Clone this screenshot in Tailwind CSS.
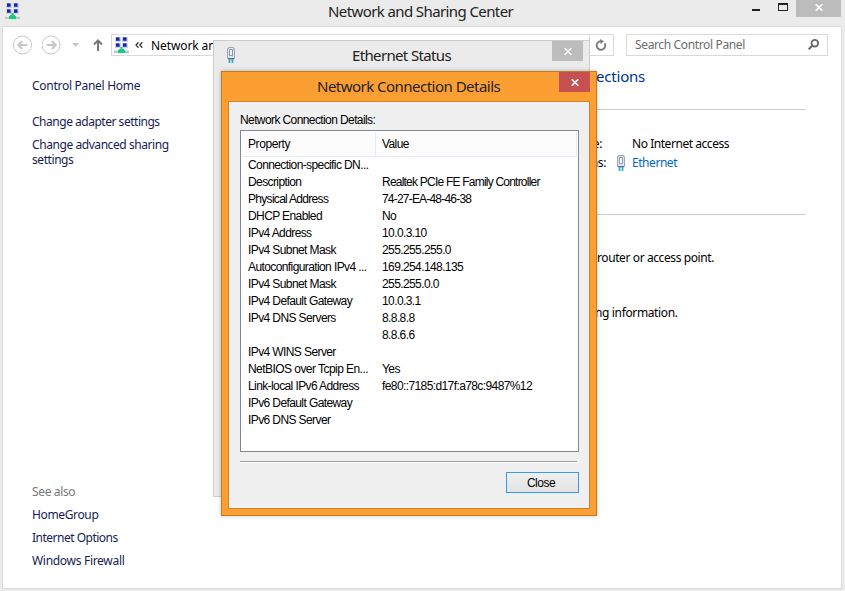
<!DOCTYPE html>
<html lang="en">
<head>
<meta charset="utf-8">
<title>Network and Sharing Center</title>
<script src="https://cdn.jsdelivr.net/npm/@tailwindcss/browser@4"></script>
</head>
<body class="relative h-[591px] w-[845px] overflow-hidden bg-[#ebebeb] font-['Noto_Sans','Open_Sans',sans-serif] text-[12px] leading-[15px] tracking-[-0.36px] text-black">
<svg class="hidden">
  <symbol id="net" viewBox="0 0 16 16">
    <path d="M1 0h6v5H1zM8 0h6v5H8zM1 6h6v5H1zM8 6h6v5H8z" fill="#ced3df"/>
    <path d="M2 .5h4v3.5H2zM9 .5h4v3.5H9zM2 6.5h4V10H2zM9 6.5h4V10H9z" fill="#5b74dc"/>
    <path d="M2 .5h3v3H2zM9 .5h3v3H9zM2 6.5h3v3H2zM9 6.5h3v3H9z" fill="#1526a8"/>
    <path fill="#bfc2c2" d="M0 13h15v3H0z"/><path fill="#e6e6e6" d="M0 13h15v1H0z"/><path fill="#16cc80" d="M6.500 10h2v2h1.500v1h1v3H4v-3h1v-1h1.500z"/>
  </symbol>
  <symbol id="plug" viewBox="0 0 10 16">
    <path d="M1.500 1.500h1v-1h5v1h1v10h-7z" fill="#dfe5ec" stroke="#9aa5b8"/>
    <path d="M3.500 2.500h3v6h-3z" fill="#fafcfe" stroke="#8a97ac"/>
    <path d="M2 11h6v1.500H2z" fill="#4f6f8c"/><path d="M3.500 12.500v3.500M6.500 12.500v3.500" stroke="#35a9d6" stroke-width="1.800"/>
  </symbol>
  <symbol id="x" viewBox="0 0 8 7"><path d="M.7.2l6.600 6.600M7.300.2L.7 6.800" stroke="#fff" stroke-width="1.600"/></symbol>
</svg>

<!-- Main window -->
<div class="flex h-[591px] w-[845px] flex-col pr-[3px] pb-[2px] pl-[2px]">
  <header class="grid h-[26px] shrink-0 grid-cols-[326px_186px_1fr] items-start">
    <svg class="mt-[3px] ml-[3px] h-4 w-4"><use href="#net"/></svg>
    <h1 class="mt-[-1px] text-[15px] leading-[24px] tracking-[-0.6px] whitespace-nowrap text-[#222]">Network and Sharing Center</h1>
    <div class="flex justify-end">
      <div class="mt-[9px] mr-[18px] h-[2px] w-2 bg-[#222]"></div>
      <div class="mt-[3px] mr-2 h-2 w-[10px] border border-t-2 border-[#222]"></div>
      <div class="mr-[1px] flex h-[17px] w-[45px] items-center justify-center bg-[#bcbcbc] pb-[2px]"><svg class="h-[7px] w-2"><use href="#x"/></svg></div>
    </div>
  </header>
  <div class="flex min-h-0 flex-1 flex-col border border-[#d9d9d9] bg-white">
    <nav class="mt-[7px] flex h-[22px] items-center pr-[12px] pl-[10px]">
      <svg class="h-5 w-5" viewBox="0 0 20 20" fill="none" stroke="#c8c8c8"><circle cx="9.500" cy="10" r="9"/><path d="M14.500 10H5.500M9.200 6l-4 4 4 4" stroke-width="2"/></svg>
      <svg class="ml-[9px] h-5 w-5" viewBox="0 0 20 20" fill="none" stroke="#c8c8c8"><circle cx="9" cy="10" r="9"/><path d="M4.500 10h9M9.800 6l4 4-4 4" stroke-width="2"/></svg>
      <svg class="ml-[10px] h-1 w-[7px]" viewBox="0 0 7 4"><path d="M0 0h7L3.500 4z" fill="#c8c8c8"/></svg>
      <svg class="ml-[14px] h-3 w-[10px]" viewBox="0 0 10 12" fill="none" stroke="#777" stroke-width="2"><path d="M5 12V1.500M1 5.500l4-4 4 4"/></svg>
      <div class="ml-2 flex h-[22px] w-[479px] items-center border border-[#d9d9d9] pl-[2px]">
        <svg class="h-4 w-4"><use href="#net"/></svg>
        <svg class="ml-[5px] h-[6px] w-2" viewBox="0 0 8 6" fill="none" stroke="#222" stroke-width="1.200"><path d="M3.500.3L1 3l2.500 2.700M7.300.3L4.800 3l2.500 2.700"/></svg>
        <span class="ml-2 whitespace-nowrap tracking-[-0.1px]">Network and</span>
      </div>
      <div class="ml-[-1px] flex h-[22px] w-[25px] items-center justify-center border border-[#d9d9d9] pr-px">
        <svg class="h-3 w-3" viewBox="0 0 12 12" fill="none" stroke="#777" stroke-width="1.800"><path d="M9.600 4.200A4.300 4.300 0 1 1 5.500 2.200"/><path d="M5 0l4 2.500L5.500 5z" fill="#777" stroke="none"/></svg>
      </div>
      <div class="ml-3 flex h-[22px] w-[202px] items-center justify-between border border-[#d9d9d9] pr-2 pb-px pl-2">
        <span class="text-[#6d6d6d]">Search Control Panel</span>
        <svg class="h-[11px] w-[11px]" viewBox="0 0 11 11" fill="none" stroke="#666"><circle cx="6.800" cy="4.200" r="3.300" stroke-width="1.800"/><path d="M4.500 6.500L.7 10.300" stroke-width="2"/></svg>
      </div>
    </nav>
    <div class="flex min-h-0 flex-1">
      <aside class="flex w-[582px] flex-col pl-[29px] text-[#151c55]">
        <a class="mt-[22px] tracking-[-0.28px]">Control Panel Home</a>
        <a class="mt-[21px] tracking-[-0.48px]">Change adapter settings</a>
        <a class="mt-[8px] w-[150px] tracking-[-0.43px]">Change advanced sharing settings</a>
        <span class="mt-[317px] text-[#7a7a7a]">See also</span>
        <a class="mt-[8px]">HomeGroup</a>
        <a class="mt-[8px] tracking-[-0.5px]">Internet Options</a>
        <a class="mt-[8px] tracking-[-0.3px]">Windows Firewall</a>
      </aside>
      <main class="flex w-[221px] flex-col">
        <h2 class="mt-[10px] ml-[11px] text-[15px] leading-[20px] tracking-[-0.2px] text-[#003399]">ections</h2>
        <hr class="mt-[23px] border-[#cccccc]">
        <div class="mt-[24px] grid h-[80px] grid-cols-[17px_13px_1fr] grid-rows-[19px_19px] items-center">
          <span class="justify-self-end">e:</span><span></span><span class="pl-[17px] tracking-[-0.45px]">No Internet access</span>
          <span class="mr-[-4px] justify-self-end whitespace-nowrap">ns:</span><svg class="ml-[14px] h-4 w-[10px]"><use href="#plug"/></svg><a class="pl-[17px] tracking-[-0.45px] text-[#0066cc]">Ethernet</a>
        </div>
        <hr class="border-[#cccccc]">
        <p class="mt-[35px] ml-[12px] tracking-[-0.4px] whitespace-nowrap">router or access point.</p>
        <p class="mt-[40px] ml-[10px] whitespace-nowrap">ng information.</p>
      </main>
    </div>
  </div>
</div>

<!-- Ethernet Status window -->
<section class="absolute top-[40px] left-[213px] flex h-[457px] w-[377px] flex-col border border-[#cccccc] bg-[#ebebeb]">
  <header class="flex h-[30px] items-start">
    <svg class="mt-[6px] ml-[12px] h-4 w-[10px]"><use href="#plug"/></svg>
    <h2 class="mt-[2px] ml-[116px] w-[100px] text-[15px] leading-[24px] tracking-[-0.65px] whitespace-nowrap text-[#222]">Ethernet Status</h2>
    <div class="ml-[100px] flex h-[20px] w-[31px] items-center justify-center bg-[#bcbcbc]"><svg class="h-[7px] w-2"><use href="#x"/></svg></div>
  </header>
  <div class="mx-[7px] mb-[7px] flex-1 border border-[#d5d5d5] bg-[#f0f0f0]"></div>
</section>

<!-- Network Connection Details window -->
<section class="absolute top-[71px] left-[221px] flex h-[445px] w-[376px] flex-col border border-[#c47a26] bg-[#fc9f32] px-[6px] pb-[6px] shadow-[0_0_4px_rgba(0,0,0,0.25)]">
  <header class="flex h-[29px] shrink-0 items-start justify-end">
    <h2 class="mt-[2px] mr-[59px] w-[183px] text-[15px] leading-[24px] tracking-[-0.52px] whitespace-nowrap text-[#222]">Network Connection Details</h2>
    <div class="flex h-[20px] w-[31px] items-center justify-center bg-[#c75050]"><svg class="h-[7px] w-2"><use href="#x"/></svg></div>
  </header>
  <div class="flex flex-1 flex-col border border-[#cf8229] bg-[#f0f0f0] pr-[10px] pl-[11px] font-['Liberation_Sans',Arial,sans-serif] text-[12px] tracking-[-0.6px]">
    <label class="mt-[10px] leading-[16px]">Network Connection Details:</label>
    <div class="mt-[2px] h-[322px] w-[339px] border border-[#828790] bg-white p-px">
      <div class="grid h-[25px] grid-cols-[134px_1fr] border-b border-[#e5ecf7] bg-[#fcfcfc] leading-[24px]">
        <span class="border-r border-[#e5ecf7] pl-[6px] tracking-[-0.4px]">Property</span><span class="border-r border-[#e5ecf7] pl-[6px]">Value</span>
      </div>
      <div class="grid auto-rows-[17px] grid-cols-[134px_1fr] pl-[6px] leading-[17px] whitespace-nowrap">
        <span>Connection-specific DN...</span><span></span>
        <span>Description</span><span class="tracking-[-0.78px]">Realtek PCIe FE Family Controller</span>
        <span class="tracking-[-0.7px]">Physical Address</span><span class="tracking-[-0.8px]">74-27-EA-48-46-38</span>
        <span>DHCP Enabled</span><span>No</span>
        <span>IPv4 Address</span><span>10.0.3.10</span>
        <span>IPv4 Subnet Mask</span><span>255.255.255.0</span>
        <span>Autoconfiguration IPv4 ...</span><span>169.254.148.135</span>
        <span>IPv4 Subnet Mask</span><span>255.255.0.0</span>
        <span>IPv4 Default Gateway</span><span>10.0.3.1</span>
        <span>IPv4 DNS Servers</span><span>8.8.8.8</span>
        <span></span><span>8.8.6.6</span>
        <span>IPv4 WINS Server</span><span></span>
        <span class="tracking-[-0.55px]">NetBIOS over Tcpip En...</span><span>Yes</span>
        <span>Link-local IPv6 Address</span><span>fe80::7185:d17f:a78c:9487%12</span>
        <span>IPv6 Default Gateway</span><span></span>
        <span>IPv6 DNS Server</span><span></span>
      </div>
    </div>
    <div class="mt-[9px] h-[2px] w-[337px] border-t border-b border-t-[#a0a0a0] border-b-white"></div>
    <button class="mt-[9px] h-[21px] w-[73px] self-end border border-[#3399ff] bg-linear-to-b from-[#f0f0f0] to-[#e3e3e3] pt-px pr-[3px] tracking-[-0.5px]">Close</button>
  </div>
</section>
</body>
</html>
